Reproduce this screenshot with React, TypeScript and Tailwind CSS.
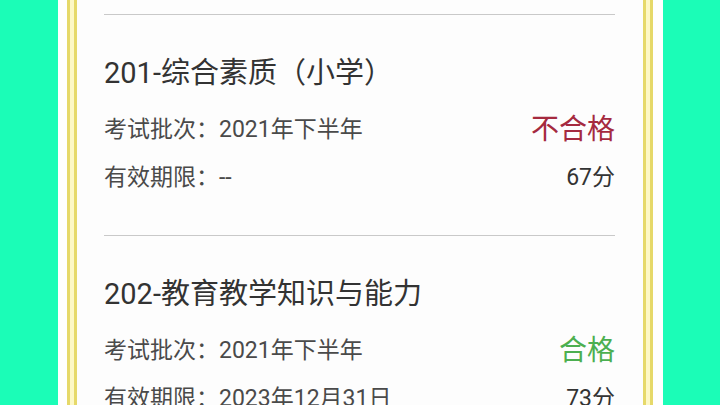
const font = { fontFamily: 'Roboto, "Noto Sans CJK SC", sans-serif' };

type Item = {
  title: string;
  batch: string;
  expire: string;
  result: string;
  pass: boolean;
  score: string;
};

const items: Item[] = [
  { title: "201-综合素质（小学）", batch: "2021年下半年", expire: "--", result: "不合格", pass: false, score: "67分" },
  { title: "202-教育教学知识与能力", batch: "2021年下半年", expire: "2023年12月31日", result: "合格", pass: true, score: "73分" },
];

function ScoreItem({ item }: { item: Item }) {
  return (
    <div className="border-t border-[#c9c9c9] pt-[40px] pb-[41px]">
      <div className="text-[29px] leading-[36px] text-[#333333] whitespace-nowrap">{item.title}</div>
      <div className="mt-[23px] flex items-center justify-between h-[32px]">
        <span className="text-[23px] text-[#4a4a4a] whitespace-nowrap">考试批次：{item.batch}</span>
        <span className={item.pass ? "text-[28px] text-[#4caf50] whitespace-nowrap" : "text-[28px] text-[#a52a3f] whitespace-nowrap"}>
          {item.result}
        </span>
      </div>
      <div className="mt-[16px] flex items-center justify-between h-[32px]">
        <span className="text-[23px] text-[#4a4a4a] whitespace-nowrap">有效期限：{item.expire}</span>
        <span className="text-[23px] text-[#333333] whitespace-nowrap">{item.score}</span>
      </div>
    </div>
  );
}

function Frame() {
  return (
    <div className="flex shrink-0">
      <div className="w-[3px] bg-[#e6d96a]" />
      <div className="w-[4px] bg-[#fdf8c6]" />
      <div className="w-[3px] bg-[#e6d96a]" />
    </div>
  );
}

export default function App() {
  return (
    <div className="flex h-[405px] w-[720px] overflow-hidden bg-[#1bfdb7]" style={font}>
      <div className="w-[58px] shrink-0" />
      <div className="w-[9px] shrink-0 bg-white" />
      <Frame />
      <div className="w-[566px] shrink-0 bg-[#fdfdfd] pl-[27px] pr-[28px] pt-[14px]">
        {items.map((it) => (
          <ScoreItem key={it.title} item={it} />
        ))}
      </div>
      <Frame />
      <div className="w-[10px] shrink-0 bg-white" />
      <div className="flex-1" />
    </div>
  );
}
